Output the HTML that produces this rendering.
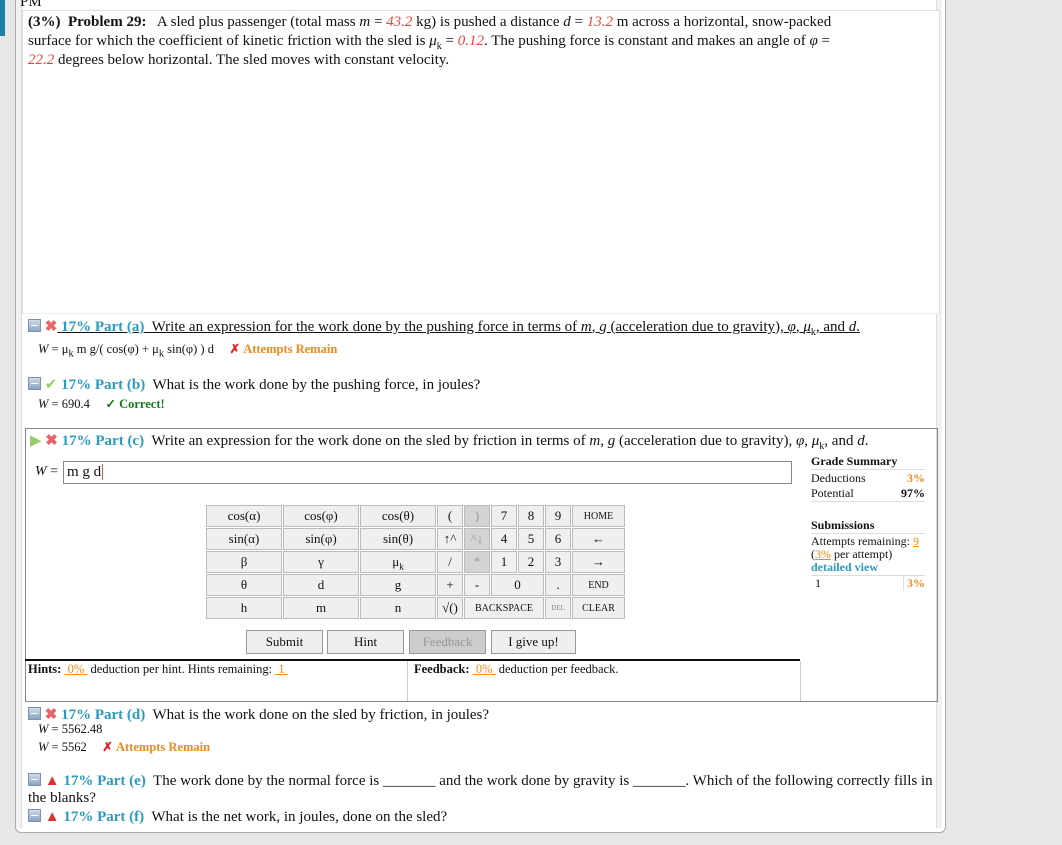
<!DOCTYPE html>
<html><head><meta charset="utf-8"><style>
body{margin:0;width:1062px;height:845px;background:#e6e7e9;font-family:"Liberation Serif",serif;color:#111;position:relative;overflow:hidden}
.a{position:absolute}
sub{line-height:0}
.teal{color:#2a9bbf;font-weight:bold}
.or{color:#f08a1e}
.red{color:#e8453c;font-style:italic}
.ico{display:inline-block;width:11px;height:11px;background:linear-gradient(#cfdbe8,#8aa5c4);border:1px solid #7b92b0;vertical-align:-1px;position:relative}
.ico:after{content:"";position:absolute;left:2px;right:2px;top:5px;height:1px;background:#fff}
.x{color:#e8636a;font-size:15px;font-weight:bold}
table.k{border-collapse:separate;border-spacing:1px;font-size:13px}
table.k td{background:#efefef;border:1px solid #bbb;text-align:center;height:20px;padding:0}
table.k td.g{background:#d4d4d4;color:#999}
.btn{position:absolute;top:630px;height:22px;background:#efefef;border:1px solid #999;font-size:13px;text-align:center;line-height:22px}
.gs{font-size:12px}
.p{font-size:15px;white-space:nowrap}
.s{font-size:12.5px}
</style></head><body>
<div class="a" style="left:0;top:0;width:5px;height:36px;background:#1d7ea6"></div>
<div class="a" style="left:15px;top:-5px;width:929px;height:836px;background:#fff;border:1px solid #aaa;border-radius:0 0 6px 6px"></div>
<div class="a" style="left:16px;top:0;width:5px;height:828px;background:#f2f2f2;border-right:1px solid #ddd"></div>
<div class="a" style="left:936px;top:0;width:5px;height:828px;background:#f2f2f2;border-left:1px solid #ddd"></div>
<div class="a" style="left:20px;top:-6px;font-size:15px">PM</div>
<div class="a" style="left:22px;top:10px;width:916px;height:302px;border:1px solid #ddd;border-bottom:1px solid #eee;background:#fff"></div>
<div class="a" style="left:28px;top:13px;font-size:15px;line-height:19px;white-space:nowrap"><b>(3%)&nbsp; Problem 29:</b>&nbsp;&nbsp; A sled plus passenger (total mass <i>m</i> = <span class="red">43.2</span> kg) is pushed a distance <i>d</i> = <span class="red">13.2</span> m across a horizontal, snow-packed<br>surface for which the coefficient of kinetic friction with the sled is <i>μ</i><sub style="font-size:10px">k</sub> = <span class="red">0.12</span>. The pushing force is constant and makes an angle of <i>φ</i> =<br><span class="red">22.2</span> degrees below horizontal. The sled moves with constant velocity.</div>

<div class="a p" style="left:28px;top:317px"><span class="ico"></span> <span class="x">✖</span><u> <span class="teal">17% Part (a)</span>&nbsp; Write an expression for the work done by the pushing force in terms of <i>m</i>, <i>g</i> (acceleration due to gravity), <i>φ</i>, <i>μ</i><sub style="font-size:10px">k</sub>, and <i>d</i>. </u></div>
<div class="a s" style="left:38px;top:341px"><i>W</i> = μ<sub>k</sub> m g/( cos(φ) + μ<sub>k</sub> sin(φ) ) d &nbsp;&nbsp;&nbsp;&nbsp;<b style="color:#e02020">✗</b> <b class="or">Attempts Remain</b></div>
<div class="a p" style="left:28px;top:375px"><span class="ico"></span> <span style="color:#9c6">✔</span> <span class="teal">17% Part (b)</span>&nbsp; What is the work done by the pushing force, in joules?</div>
<div class="a s" style="left:38px;top:396px"><i>W</i> = 690.4 &nbsp;&nbsp;&nbsp;&nbsp;<b style="color:#1a7a1a">✓ Correct!</b></div>

<div class="a" style="left:25px;top:428px;width:911px;height:272px;border:1px solid #888"></div>
<div class="a p" style="left:30px;top:431px"><span style="color:#9c6">▶</span> <span class="x">✖</span> <span class="teal">17% Part (c)</span>&nbsp; Write an expression for the work done on the sled by friction in terms of <i>m</i>, <i>g</i> (acceleration due to gravity), <i>φ</i>, <i>μ</i><sub style="font-size:10px">k</sub>, and <i>d</i>.</div>
<div class="a" style="left:35px;top:464px;font-size:14px"><i>W</i> =</div>
<div class="a" style="left:63px;top:461px;width:724px;height:21px;border:1px solid #888;font-size:15px;line-height:21px;padding-left:3px">m g d<span style="border-left:1px solid #e55;margin-left:1px"></span></div>

<div class="a" style="left:811px;top:454px;width:114px">
<div class="gs" style="font-weight:bold;border-bottom:1px solid #ddd">Grade Summary</div>
<div class="gs" style="display:flex;justify-content:space-between;margin-top:1px"><span>Deductions</span><span class="or" style="font-weight:bold">3%</span></div>
<div class="gs" style="display:flex;justify-content:space-between;border-bottom:1px solid #ddd"><span>Potential</span><b>97%</b></div>
<div class="gs" style="font-weight:bold;margin-top:16px;border-bottom:1px solid #ddd">Submissions</div>
<div class="gs">Attempts remaining: <u class="or">9</u></div>
<div class="gs" style="margin-top:-2px">(<u class="or">3%</u> per attempt)</div>
<div class="gs teal" style="margin-top:-2px;border-bottom:1px solid #ddd">detailed view</div>
<div class="gs" style="display:flex"><span style="width:88px;padding-left:4px;border-right:1px solid #ddd">1</span><b class="or" style="padding-left:3px">3%</b></div>
</div>

<table class="k a" style="left:205px;top:504px">
<tr><td style="width:74px">cos(α)</td><td style="width:74px">cos(φ)</td><td style="width:74px">cos(θ)</td><td style="width:24px">(</td><td class="g" style="width:24px">)</td><td style="width:24px">7</td><td style="width:24px">8</td><td style="width:24px">9</td><td style="width:51px;font-size:10px">HOME</td></tr>
<tr><td>sin(α)</td><td>sin(φ)</td><td>sin(θ)</td><td>↑^</td><td class="g">^↓</td><td>4</td><td>5</td><td>6</td><td>←</td></tr>
<tr><td>β</td><td>γ</td><td>μ<sub style="font-size:9px">k</sub></td><td>/</td><td class="g">*</td><td>1</td><td>2</td><td>3</td><td>→</td></tr>
<tr><td>θ</td><td>d</td><td>g</td><td>+</td><td>-</td><td colspan="2">0</td><td>.</td><td style="font-size:10px">END</td></tr>
<tr><td>h</td><td>m</td><td>n</td><td>√()</td><td colspan="3" style="font-size:10px">BACKSPACE</td><td style="font-size:7px;color:#888">DEL</td><td style="font-size:10px">CLEAR</td></tr>
</table>

<div class="btn" style="left:246px;width:75px">Submit</div>
<div class="btn" style="left:327px;width:75px">Hint</div>
<div class="btn" style="left:409px;width:75px;background:#ccc;color:#999">Feedback</div>
<div class="btn" style="left:491px;width:83px">I give up!</div>

<div class="a" style="left:25px;top:659px;width:775px;border-top:2px solid #111"></div>
<div class="a" style="left:407px;top:661px;height:40px;border-left:1px solid #ccc"></div>
<div class="a" style="left:800px;top:661px;height:40px;border-left:1px solid #ccc"></div>
<div class="a s" style="left:28px;top:662px"><b>Hints:</b> <u class="or">&nbsp;0%&nbsp;</u> deduction per hint. Hints remaining: <u class="or">&nbsp;1&nbsp;</u></div>
<div class="a s" style="left:414px;top:662px"><b>Feedback:</b> <u class="or">&nbsp;0%&nbsp;</u> deduction per feedback.</div>

<div class="a p" style="left:28px;top:705px"><span class="ico"></span> <span class="x">✖</span> <span class="teal">17% Part (d)</span>&nbsp; What is the work done on the sled by friction, in joules?</div>
<div class="a s" style="left:38px;top:722px"><i>W</i> = 5562.48</div>
<div class="a s" style="left:38px;top:739px"><i>W</i> = 5562 &nbsp;&nbsp;&nbsp;&nbsp;<b style="color:#e02020">✗</b> <b class="or">Attempts Remain</b></div>
<div class="a" style="left:28px;top:773px;width:910px;font-size:15px;line-height:17px;white-space:nowrap"><span class="ico"></span> <span style="color:#d33">▲</span> <span class="teal">17% Part (e)</span>&nbsp; The work done by the normal force is _______ and the work done by gravity is _______. Which of the following correctly fills in<br>the blanks?</div>
<div class="a p" style="left:28px;top:809px"><span class="ico"></span> <span style="color:#d33">▲</span> <span class="teal">17% Part (f)</span>&nbsp; What is the net work, in joules, done on the sled?</div>
</body></html>
